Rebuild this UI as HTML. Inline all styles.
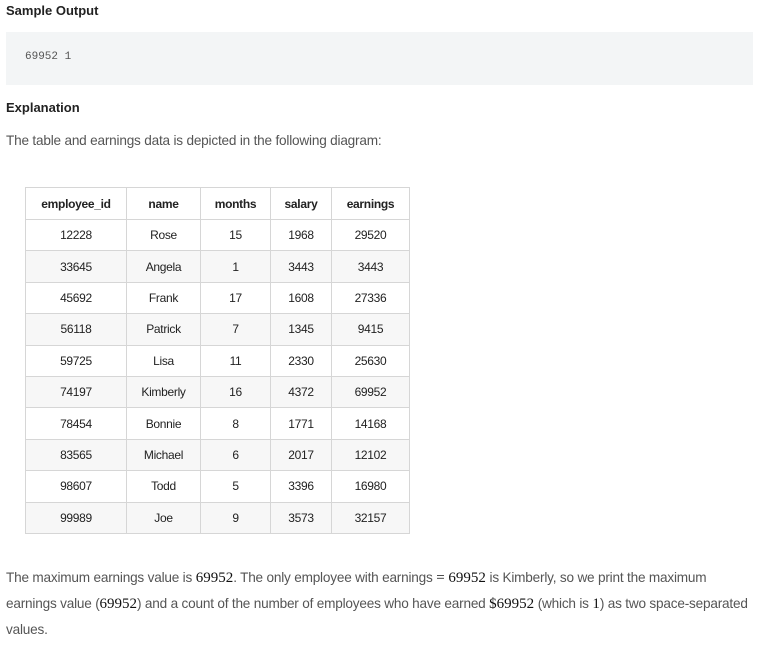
<!DOCTYPE html>
<html><head><style>
body{margin:0;background:#fff;font-family:"Liberation Sans",sans-serif;color:#555;width:760px;height:647px;position:relative;overflow:hidden}
.a{position:absolute}
h{font-weight:bold;color:#222;font-size:13px}
.code{left:6px;top:32px;width:747px;height:53px;background:#f3f5f6}
.code span{position:absolute;left:19px;top:19px;font-family:"Liberation Mono",monospace;font-size:11px;color:#555}
p{margin:0;font-size:13.6px;letter-spacing:-0.2px;white-space:nowrap}
table{border-collapse:collapse;position:absolute;left:25px;top:187px;font-size:12px;color:#222;letter-spacing:-0.3px}
td,th{border:1px solid #d6d6d6;text-align:center;height:30.4px;padding:0}
th{height:31px}
tr:nth-child(odd) td{background:#f7f7f7}
.m{font-family:"Liberation Serif",serif;color:#111;font-size:15px;letter-spacing:0}
</style></head><body>
<div class="a" style="left:6px;top:2px"><h>Sample Output</h></div>
<div class="a code"><span>69952 1</span></div>
<div class="a" style="left:6px;top:99px"><h>Explanation</h></div>
<p class="a" style="left:6px;top:133px">The table and earnings data is depicted in the following diagram:</p>
<table>
<tr><th style="width:100px">employee_id</th><th style="width:73px">name</th><th style="width:69px">months</th><th style="width:60px">salary</th><th style="width:77px">earnings</th></tr>
<tr><td>12228</td><td>Rose</td><td>15</td><td>1968</td><td>29520</td></tr>
<tr><td>33645</td><td>Angela</td><td>1</td><td>3443</td><td>3443</td></tr>
<tr><td>45692</td><td>Frank</td><td>17</td><td>1608</td><td>27336</td></tr>
<tr><td>56118</td><td>Patrick</td><td>7</td><td>1345</td><td>9415</td></tr>
<tr><td>59725</td><td>Lisa</td><td>11</td><td>2330</td><td>25630</td></tr>
<tr><td>74197</td><td>Kimberly</td><td>16</td><td>4372</td><td>69952</td></tr>
<tr><td>78454</td><td>Bonnie</td><td>8</td><td>1771</td><td>14168</td></tr>
<tr><td>83565</td><td>Michael</td><td>6</td><td>2017</td><td>12102</td></tr>
<tr><td>98607</td><td>Todd</td><td>5</td><td>3396</td><td>16980</td></tr>
<tr><td>99989</td><td>Joe</td><td>9</td><td>3573</td><td>32157</td></tr>
</table>
<p class="a" style="left:6px;top:570px">The maximum earnings value is <span class="m">69952</span>. The only employee with earnings <span class="m">= 69952</span> is Kimberly, so we print the maximum</p>
<p class="a" style="left:6px;top:596px">earnings value (<span class="m">69952</span>) and a count of the number of employees who have earned <span class="m">$69952</span> (which is <span class="m">1</span>) as two space-separated</p>
<p class="a" style="left:6px;top:622px">values.</p>
</body></html>
